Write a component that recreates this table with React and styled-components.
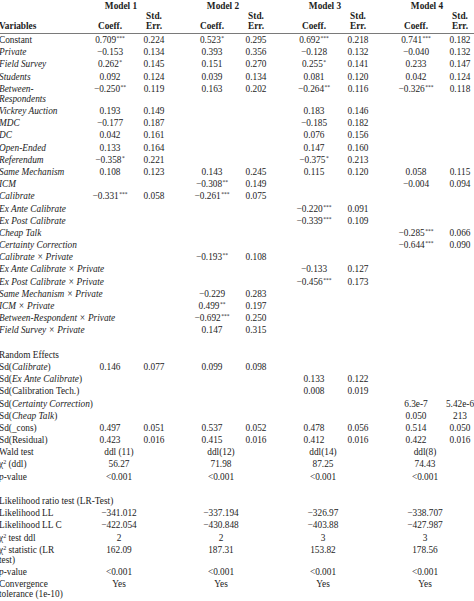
import styled, { createGlobalStyle } from 'styled-components';

const GlobalStyle = createGlobalStyle`
  html, body {
    margin: 0;
    padding: 0;
    background: #ffffff;
    overflow: hidden;
  }
  body {
    font-family: "Liberation Serif", "Times New Roman", serif;
    color: #1c1c1c;
  }
`;

const Page = styled.div`
  width: 474px;
  height: 601px;
  overflow: hidden;
`;

const Table = styled.table`
  margin-left: -1px;
  border-collapse: collapse;
  table-layout: fixed;
  width: 497px;
  font-size: 9.3px;
  line-height: 10px;
`;

const HeadCell = styled.th`
  font-weight: bold;
  vertical-align: bottom;
  text-align: ${(p) => (p.$left ? 'left' : 'center')};
  padding: 0 ${(p) => (p.$left ? 4 : p.$se ? 21 : 7)}px 2px 0;
`;

const ModelHead = styled.th`
  font-weight: bold;
  text-align: center;
  padding: 1px 36px 0 0;
`;

const RuleRow = styled.tr`
  border-bottom: 1.6px solid #7a7a7a;
`;

const Label = styled.td`
  text-align: left;
  vertical-align: top;
  padding: 1.1px 18px 1.1px 0;
  white-space: ${(p) => (p.$nowrap ? 'nowrap' : 'normal')};
`;

const Cell = styled.td`
  text-align: center;
  vertical-align: top;
  white-space: nowrap;
  padding: 1.1px ${(p) => (p.$kind === 'se' ? 21 : p.$kind === 'span' ? 40 : 7)}px 1.1px 0;
`;

const Stars = styled.sup`
  font-size: 5.5px;
  line-height: 0;
  vertical-align: 3px;
  margin-left: 0.5px;
`;

const Sup = styled.sup`
  font-size: 6px;
  line-height: 0;
  vertical-align: 3px;
`;

const Blank = styled.tr`
  height: 12.2px;
`;

const Num = ({ v }) => {
  if (v == null) return null;
  const m = /^(-?)([^*]*)(\**)$/.exec(v);
  return (
    <>
      {m[1] ? '\u2212' : ''}
      {m[2]}
      {m[3] && <Stars>{m[3]}</Stars>}
    </>
  );
};

const chi = (
  <>
    χ<Sup>2</Sup>
  </>
);

const rows = [
  { label: 'Constant', c: ['0.709***', '0.224', '0.523*', '0.295', '0.692***', '0.218', '0.741***', '0.182'] },
  { label: <i>Private</i>, c: ['-0.153', '0.134', '0.393', '0.356', '-0.128', '0.132', '-0.040', '0.132'] },
  { label: <i>Field Survey</i>, c: ['0.262*', '0.145', '0.151', '0.270', '0.255*', '0.141', '0.233', '0.147'] },
  { label: <i>Students</i>, c: ['0.092', '0.124', '0.039', '0.134', '0.081', '0.120', '0.042', '0.124'] },
  { label: <i>Between-Respondents</i>, c: ['-0.250**', '0.119', '0.163', '0.202', '-0.264**', '0.116', '-0.326***', '0.118'] },
  { label: <i>Vickrey Auction</i>, c: ['0.193', '0.149', null, null, '0.183', '0.146', null, null] },
  { label: <i>MDC</i>, c: ['-0.177', '0.187', null, null, '-0.185', '0.182', null, null] },
  { label: <i>DC</i>, c: ['0.042', '0.161', null, null, '0.076', '0.156', null, null] },
  { label: <i>Open-Ended</i>, c: ['0.133', '0.164', null, null, '0.147', '0.160', null, null] },
  { label: <i>Referendum</i>, c: ['-0.358*', '0.221', null, null, '-0.375*', '0.213', null, null] },
  { label: <i>Same Mechanism</i>, c: ['0.108', '0.123', '0.143', '0.245', '0.115', '0.120', '0.058', '0.115'] },
  { label: <i>ICM</i>, c: [null, null, '-0.308**', '0.149', null, null, '-0.004', '0.094'] },
  { label: <i>Calibrate</i>, c: ['-0.331***', '0.058', '-0.261***', '0.075', null, null, null, null] },
  { label: <i>Ex Ante Calibrate</i>, c: [null, null, null, null, '-0.220***', '0.091', null, null] },
  { label: <i>Ex Post Calibrate</i>, c: [null, null, null, null, '-0.339***', '0.109', null, null] },
  { label: <i>Cheap Talk</i>, c: [null, null, null, null, null, null, '-0.285***', '0.066'] },
  { label: <i>Certainty Correction</i>, c: [null, null, null, null, null, null, '-0.644***', '0.090'] },
  { label: <i>Calibrate × Private</i>, c: [null, null, '-0.193**', '0.108', null, null, null, null] },
  { label: <i>Ex Ante Calibrate × Private</i>, c: [null, null, null, null, '-0.133', '0.127', null, null] },
  { label: <i>Ex Post Calibrate × Private</i>, c: [null, null, null, null, '-0.456***', '0.173', null, null] },
  { label: <i>Same Mechanism × Private</i>, c: [null, null, '-0.229', '0.283', null, null, null, null] },
  { label: <i>ICM × Private</i>, c: [null, null, '0.499**', '0.197', null, null, null, null] },
  { label: <i>Between-Respondent × Private</i>, c: [null, null, '-0.692***', '0.250', null, null, null, null] },
  { label: <i>Field Survey × Private</i>, c: [null, null, '0.147', '0.315', null, null, null, null] },
  { blank: true },
  { section: 'Random Effects' },
  { label: <>Sd(<i>Calibrate</i>)</>, c: ['0.146', '0.077', '0.099', '0.098', null, null, null, null] },
  { label: <>Sd(<i>Ex Ante Calibrate</i>)</>, c: [null, null, null, null, '0.133', '0.122', null, null] },
  { label: 'Sd(Calibration Tech.)', c: [null, null, null, null, '0.008', '0.019', null, null] },
  { label: <>Sd(<i>Certainty Correction</i>)</>, c: [null, null, null, null, null, null, '6.3e-7', '5.42e-6'] },
  { label: <>Sd(<i>Cheap Talk</i>)</>, c: [null, null, null, null, null, null, '0.050', '213'] },
  { label: 'Sd(_cons)', c: ['0.497', '0.051', '0.537', '0.052', '0.478', '0.056', '0.514', '0.050'] },
  { label: 'Sd(Residual)', c: ['0.423', '0.016', '0.415', '0.016', '0.412', '0.016', '0.422', '0.016'] },
  { label: 'Wald test', s: ['ddl (11)', 'ddl(12)', 'ddl(14)', 'ddl(8)'] },
  { label: <>{chi} (ddl)</>, s: ['56.27', '71.98', '87.25', '74.43'] },
  { label: <><i>p</i>-value</>, s: ['<0.001', '<0.001', '<0.001', '<0.001'] },
  { blank: true },
  { section: 'Likelihood ratio test (LR-Test)' },
  { label: 'Likelihood LL', s: ['-341.012', '-337.194', '-326.97', '-338.707'] },
  { label: 'Likelihood LL C', s: ['-422.054', '-430.848', '-403.88', '-427.987'] },
  { label: <>{chi} test ddl</>, s: ['2', '2', '3', '3'] },
  { label: <>{chi} statistic (LR test)</>, s: ['162.09', '187.31', '153.82', '178.56'] },
  { label: <><i>p</i>-value</>, s: ['<0.001', '<0.001', '<0.001', '<0.001'] },
  { label: 'Convergence tolerance (1e-10)', s: ['Yes', 'Yes', 'Yes', 'Yes'] },
];

const BodyRow = ({ row }) => {
  if (row.blank) {
    return (
      <Blank>
        <td colSpan={9} />
      </Blank>
    );
  }
  if (row.section) {
    return (
      <tr>
        <Label colSpan={9} $nowrap>
          {row.section}
        </Label>
      </tr>
    );
  }
  if (row.s) {
    return (
      <tr>
        <Label>{row.label}</Label>
        {row.s.map((v, i) => (
          <Cell key={i} colSpan={2} $kind="span">
            <Num v={v} />
          </Cell>
        ))}
      </tr>
    );
  }
  const firstEmpty = row.c[0] == null && row.c[1] == null;
  const cells = firstEmpty ? row.c.slice(2) : row.c;
  const offset = firstEmpty ? 2 : 0;
  return (
    <tr>
      <Label colSpan={firstEmpty ? 3 : 1} $nowrap={firstEmpty}>
        {row.label}
      </Label>
      {cells.map((v, i) => (
        <Cell key={i} $kind={(i + offset) % 2 === 0 ? 'coef' : 'se'}>
          <Num v={v} />
        </Cell>
      ))}
    </tr>
  );
};

const models = ['Model 1', 'Model 2', 'Model 3', 'Model 4'];

export default function App() {
  return (
    <Page>
      <GlobalStyle />
      <Table>
        <colgroup>
          <col style={{ width: 89 }} />
          {Array.from({ length: 8 }).map((_, i) => (
            <col key={i} style={{ width: 51 }} />
          ))}
        </colgroup>
        <thead>
          <tr>
            <th />
            {models.map((m) => (
              <ModelHead key={m} colSpan={2}>
                {m}
              </ModelHead>
            ))}
          </tr>
          <RuleRow>
            <HeadCell $left>Variables</HeadCell>
            {models.flatMap((m) => [
              <HeadCell key={m + 'c'}>Coeff.</HeadCell>,
              <HeadCell key={m + 's'} $se>
                Std.
                <br />
                Err.
              </HeadCell>,
            ])}
          </RuleRow>
        </thead>
        <tbody>
          {rows.map((r, i) => (
            <BodyRow key={i} row={r} />
          ))}
        </tbody>
      </Table>
    </Page>
  );
}
